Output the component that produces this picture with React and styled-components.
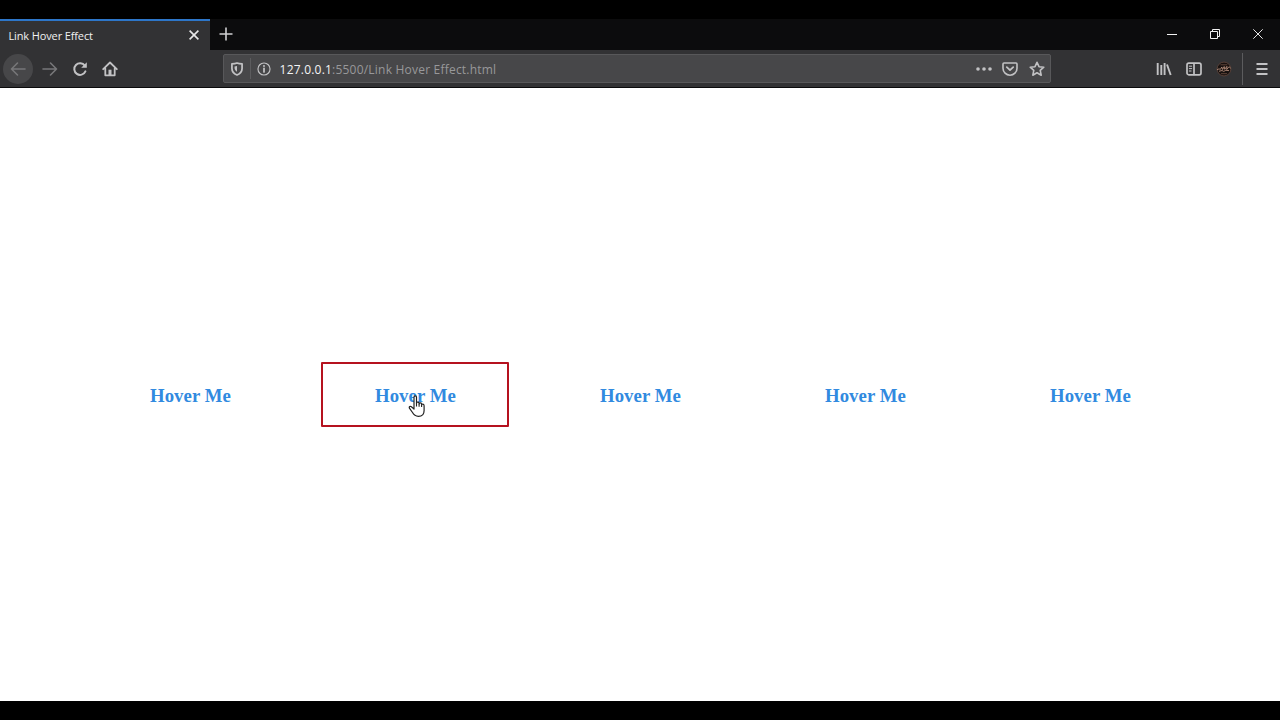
import React from "react";
import styled, { createGlobalStyle } from "styled-components";

const GlobalStyle = createGlobalStyle`
  * { box-sizing: border-box; }
  body { margin: 0; background: #000; overflow: hidden; }
`;

const Screen = styled.div`
  width: 1280px;
  height: 720px;
  padding: 19px 0;
  display: flex;
  flex-direction: column;
  background: #000;
  font-family: "Open Sans", "Noto Sans", sans-serif;
`;

const TabStrip = styled.div`
  flex: none;
  height: 31px;
  display: flex;
  background: #0c0c0d;
`;

const Tab = styled.div`
  width: 210px;
  padding: 0 9px 1px 8.5px;
  border-top: 2px solid #2d76c9;
  display: flex;
  align-items: center;
  justify-content: space-between;
  background: #323234;
`;

const TabTitle = styled.span`
  padding-top: 2px;
  font-size: 11px;
  line-height: 26px;
  letter-spacing: -0.13px;
  color: #f0f0f1;
  white-space: nowrap;
`;

const NewTab = styled.div`
  width: 32px;
  padding-bottom: 1px;
  display: flex;
  align-items: center;
  justify-content: center;
`;

const WindowControls = styled.div`
  margin-left: auto;
  padding: 0 1px 2px 0;
  display: flex;
`;

const WindowButton = styled.div`
  width: 43px;
  display: flex;
  align-items: center;
  justify-content: center;
`;

const Toolbar = styled.div`
  flex: none;
  height: 38px;
  padding-left: 3px;
  display: flex;
  align-items: center;
  background: #323234;
  border-bottom: 1px solid #0b0b0c;
`;

const ToolButton = styled.div`
  flex: none;
  width: ${(p) => p.$width || 30}px;
  height: 30px;
  display: flex;
  align-items: center;
  justify-content: center;
  border-radius: 50%;
  background: ${(p) => (p.$filled ? "#474749" : "transparent")};
  color: ${(p) => (p.$dim ? "#777779" : "#c2c2c4")};
`;

const AddressBar = styled.div`
  flex: none;
  width: 828px;
  height: 29px;
  margin-left: 97px;
  display: flex;
  align-items: center;
  background: #474749;
  border: 1px solid #58585a;
  border-radius: 2px;
`;

const Divider = styled.div`
  width: 1px;
  height: ${(p) => p.$height}px;
  background: #5c5c5e;
`;

const Address = styled.div`
  flex: 1;
  padding: 2px 0 0 2.6px;
  font-size: 12px;
  line-height: 26px;
  letter-spacing: 0.21px;
  color: #98989a;
  white-space: nowrap;
`;

const Host = styled.span`
  color: #f4f4f5;
`;

const ToolGroup = styled.div`
  margin-left: auto;
  display: flex;
  align-items: center;
`;

const Page = styled.main`
  flex: 1;
  display: flex;
  align-items: center;
  justify-content: center;
  gap: 37px;
  background: #fff;
`;

const HoverLink = styled.a`
  position: relative;
  width: 188px;
  height: 65px;
  padding: 3px 0 0 1px;
  display: flex;
  align-items: center;
  justify-content: center;
  border: 2px solid ${(p) => (p.$active ? "#b5121f" : "transparent")};
  border-radius: 1px;
  font-family: "Liberation Serif", serif;
  font-size: 18.75px;
  font-weight: 700;
  line-height: 22px;
  letter-spacing: 0.08px;
  color: #318ae0;
`;

const Pointer = styled.svg`
  position: absolute;
  left: 85px;
  top: 30px;
`;

const Icon = ({ size = 16, stroke = 1.8, children }) => (
  <svg
    width={size}
    height={size}
    viewBox="0 0 16 16"
    fill="none"
    stroke="currentColor"
    strokeWidth={stroke}
    strokeLinecap="round"
    strokeLinejoin="round"
  >
    {children}
  </svg>
);

const PointerHand = () => (
  <Pointer width="18" height="24" viewBox="0 0 18 24">
    <path
      d="M6 14V3.2C6 1.4 8.5 1.4 8.5 3.2V9.3C8.5 7.6 11.1 7.7 11.1 9.4V10C11.2 8.5 13.6 8.6 13.6 10.2V10.9C13.8 9.8 16.1 9.9 16.1 11.7V16.4C16.1 20 13.9 22.3 10.4 22.3C7.4 22.3 6 21.3 4.5 18.5L1.4 14.2C.7 12.8 2.2 11.7 3.4 12.7L6 15Z"
      fill="#fff"
      stroke="#222"
      strokeWidth="1.2"
      strokeLinejoin="round"
    />
    <path d="M8.5 9V12.5M11.1 10V12.8M13.6 11V13" stroke="#222" strokeWidth="1.1" />
  </Pointer>
);

export default function App() {
  return (
    <Screen>
      <GlobalStyle />
      <TabStrip>
        <Tab>
          <TabTitle>Link Hover Effect</TabTitle>
          <svg width="14" height="14" viewBox="0 0 14 14" stroke="#e8e8e9" strokeWidth="1.6">
            <path d="M2.6 2.6l8.8 8.8M11.4 2.6l-8.8 8.8" />
          </svg>
        </Tab>
        <NewTab>
          <svg width="14" height="14" viewBox="0 0 14 14" stroke="#cfcfd1" strokeWidth="1.6">
            <path d="M7 .5v13M.5 7h13" />
          </svg>
        </NewTab>
        <WindowControls>
          <WindowButton>
            <svg width="10" height="10" viewBox="0 0 10 10" stroke="#f2f2f2">
              <path d="M0 5.5h10" />
            </svg>
          </WindowButton>
          <WindowButton>
            <svg width="10" height="10" viewBox="0 0 10 10" fill="none" stroke="#f2f2f2">
              <path d="M.5 2.5h7v7h-7zM2.5 2.5v-2h7v7h-2" />
            </svg>
          </WindowButton>
          <WindowButton>
            <svg width="10" height="10" viewBox="0 0 10 10" stroke="#e6e6e6">
              <path d="M.3 .3l9.4 9.4M9.7 .3L.3 9.7" />
            </svg>
          </WindowButton>
        </WindowControls>
      </TabStrip>

      <Toolbar>
        <ToolButton $filled $dim>
          <Icon><path d="M15 8H1.5M7.5 2L1.5 8l6 6" strokeWidth="1.6" /></Icon>
        </ToolButton>
        <ToolButton $dim $width={33}>
          <Icon><path d="M1 8h13.5M8.5 2l6 6-6 6" strokeWidth="1.6" /></Icon>
        </ToolButton>
        <ToolButton $width={28}>
          <Icon stroke={2}>
            <path d="M12.8 4.7A5.8 5.8 0 1 0 13.4 10.4" />
            <path d="M14.8 1.2v5.6H9.2z" fill="currentColor" stroke="none" />
          </Icon>
        </ToolButton>
        <ToolButton $width={32}>
          <Icon>
            <path d="M1.2 8.2L8 1.5l6.8 6.7M3.3 7.5v6.8h9.4V7.5" />
            <path d="M6.5 8.7h3v5.5h-3z" fill="currentColor" stroke="none" />
          </Icon>
        </ToolButton>

        <AddressBar>
          <ToolButton $width={26}>
            <Icon size={14} stroke={2}>
              <path d="M8 1.2c2 .8 4 .9 5.8.9v5.2c0 3.6-2.5 6.1-5.8 7.5-3.3-1.4-5.8-3.9-5.8-7.5V2.1C4 2.1 6 2 8 1.2z" />
              <path d="M8 4.7v6.5C6.3 10 5.2 8.7 5.2 6.9V5c1 0 2-.1 2.8-.3z" fill="currentColor" stroke="none" />
            </Icon>
          </ToolButton>
          <Divider $height={21} />
          <ToolButton $width={26}>
            <Icon size={14} stroke={1.3}>
              <circle cx="8" cy="8" r="6.9" />
              <path d="M8 7.4v4" strokeWidth="2" />
              <circle cx="8" cy="4.6" r="1.1" fill="currentColor" stroke="none" />
            </Icon>
          </ToolButton>
          <Address><Host>127.0.0.1</Host>:5500/Link Hover Effect.html</Address>
          <ToolButton $width={27}>
            <Icon>
              <g fill="currentColor" stroke="none">
                <circle cx="2" cy="8" r="1.8" />
                <circle cx="8" cy="8" r="1.8" />
                <circle cx="14" cy="8" r="1.8" />
              </g>
            </Icon>
          </ToolButton>
          <ToolButton $width={26}>
            <Icon stroke={1.6}>
              <path d="M2 2h12c.6 0 1 .4 1 1v4.2A7 7 0 0 1 1 7.2V3c0-.6.4-1 1-1z" />
              <path d="M4.8 6.1L8 9.1l3.2-3" strokeWidth="1.8" />
            </Icon>
          </ToolButton>
          <ToolButton $width={27}>
            <Icon stroke={1.6}>
              <path d="M8 1.3l2 4.4 4.8.5-3.6 3.2 1 4.8L8 11.8l-4.2 2.4 1-4.8L1.2 6.2 6 5.7z" />
            </Icon>
          </ToolButton>
        </AddressBar>

        <ToolGroup>
          <ToolButton>
            <Icon stroke={1.9}>
              <path d="M1.7 2v12M5.3 4v10M8.6 2v12M11 3.5L14.7 14" strokeLinecap="butt" />
            </Icon>
          </ToolButton>
          <ToolButton>
            <Icon stroke={1.7}>
              <rect x="1" y="2.2" width="14" height="11.6" rx="1.8" />
              <path d="M8 2.5v11" />
              <path d="M3.3 5.2h2.4M3.3 7.6h2.4M3.3 10h1.8" strokeWidth="1" />
            </Icon>
          </ToolButton>
          <ToolButton>
            <svg width="16" height="16" viewBox="0 0 16 16" fill="none">
              <circle cx="8" cy="8" r="6.9" fill="#17110f" stroke="#65493f" strokeWidth=".8" />
              <path d="M1 8.7l2.2-.9 1 .8L5.8 6l.8 2.5L8.2 5.5l.5 2.8 2.2-3-.2 3.2 2.3-2.8 1.8 1.6M3 10.3l3-.8 1.7.9 2.1-1.1 3.2.3" stroke="#b18a78" strokeWidth=".9" />
              <path d="M4.5 3.8h6.8M5 12.7h6" stroke="#725044" strokeWidth=".8" />
            </svg>
          </ToolButton>
          <ToolButton $width={3} />
          <Divider $height={32} />
          <ToolButton $width={37}>
            <Icon>
              <path d="M2.5 3h11M2.5 8h11M2.5 13h11" strokeLinecap="butt" />
            </Icon>
          </ToolButton>
        </ToolGroup>
      </Toolbar>

      <Page>
        {[0, 1, 2, 3, 4].map((i) => (
          <HoverLink key={i} $active={i === 1}>
            Hover Me
            {i === 1 && <PointerHand />}
          </HoverLink>
        ))}
      </Page>
    </Screen>
  );
}
